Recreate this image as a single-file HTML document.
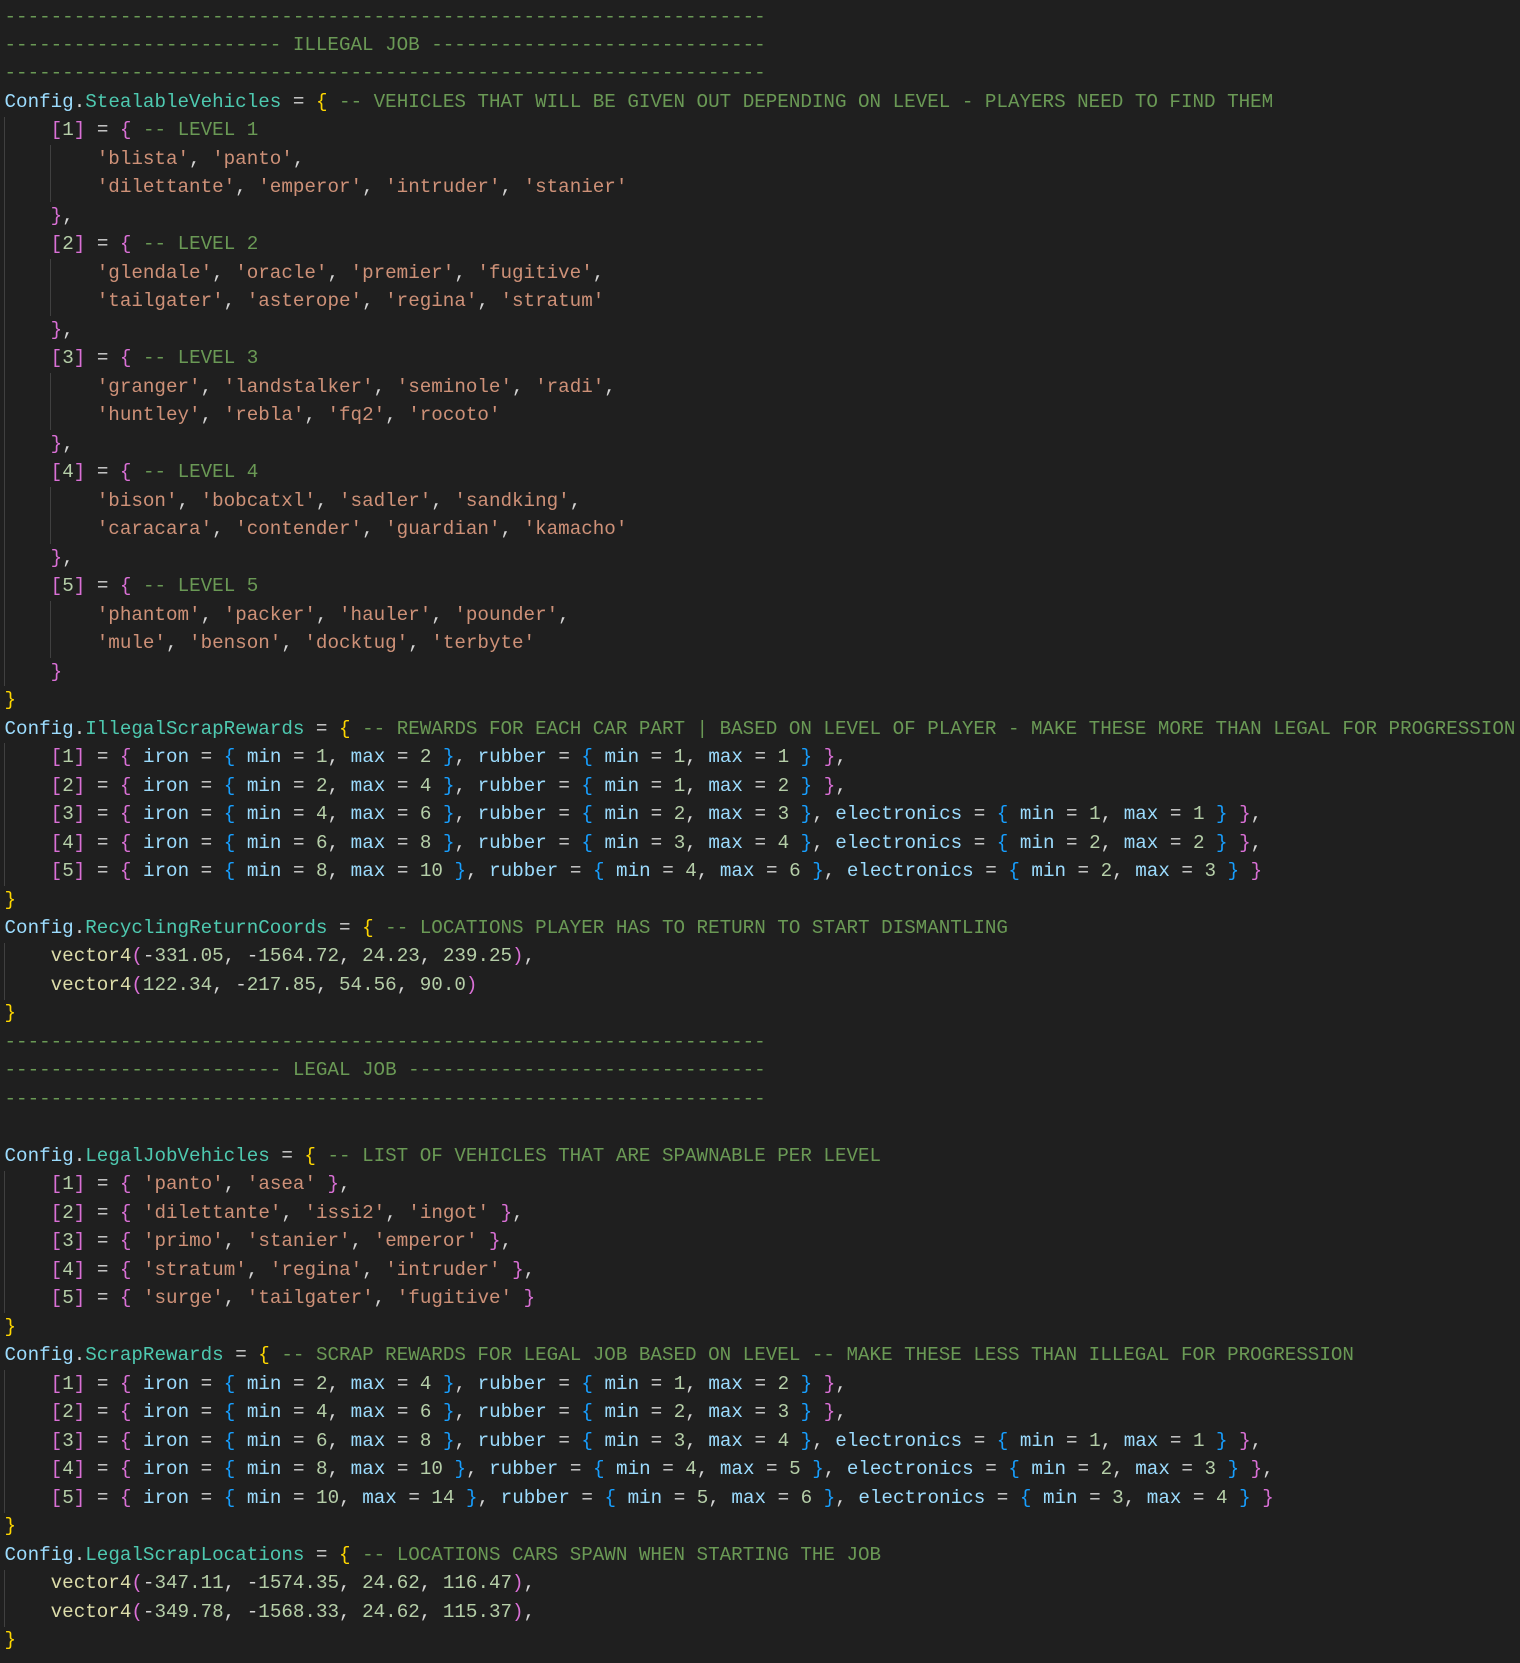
<!DOCTYPE html>
<html><head><meta charset="utf-8"><style>
html,body{margin:0;padding:0;background:#1f1f1f;}
body{width:1520px;height:1663px;overflow:hidden;position:relative;}
pre{margin:0;padding:2.5px 0 0 4.5px;font-family:"Liberation Mono",monospace;font-size:19.23px;line-height:28.49px;color:#d4d4d4;white-space:pre;position:relative;}
.c{color:#6a9955}.v{color:#9cdcfe}.p{color:#4ec9b0}.s{color:#ce9178}.n{color:#b5cea8}
.y{color:#ffd700}.o{color:#da70d6}.b{color:#179fff}.f{color:#dcdcaa}
.g{position:absolute;width:1px;background:#404040;}
</style></head><body>
<div class="g" style="left:4px;top:116.5px;height:569.8px"></div>
<div class="g" style="left:50px;top:145px;height:57px"></div>
<div class="g" style="left:50px;top:259px;height:57px"></div>
<div class="g" style="left:50px;top:373px;height:57px"></div>
<div class="g" style="left:50px;top:487px;height:57px"></div>
<div class="g" style="left:50px;top:601px;height:57px"></div>
<div class="g" style="left:4px;top:743.2px;height:142.5px"></div>
<div class="g" style="left:4px;top:942.7px;height:57px"></div>
<div class="g" style="left:4px;top:1170.6px;height:142.5px"></div>
<div class="g" style="left:4px;top:1370px;height:142.5px"></div>
<div class="g" style="left:4px;top:1569.5px;height:57px"></div>
<pre><span class="c">------------------------------------------------------------------</span>
<span class="c">------------------------ ILLEGAL JOB -----------------------------</span>
<span class="c">------------------------------------------------------------------</span>
<span class="v">Config</span>.<span class="p">StealableVehicles</span> = <span class="y">{</span> <span class="c">-- VEHICLES THAT WILL BE GIVEN OUT DEPENDING ON LEVEL - PLAYERS NEED TO FIND THEM</span>
    <span class="o">[</span><span class="n">1</span><span class="o">]</span> = <span class="o">{</span> <span class="c">-- LEVEL 1</span>
        <span class="s">'blista'</span>, <span class="s">'panto'</span>,
        <span class="s">'dilettante'</span>, <span class="s">'emperor'</span>, <span class="s">'intruder'</span>, <span class="s">'stanier'</span>
    <span class="o">}</span>,
    <span class="o">[</span><span class="n">2</span><span class="o">]</span> = <span class="o">{</span> <span class="c">-- LEVEL 2</span>
        <span class="s">'glendale'</span>, <span class="s">'oracle'</span>, <span class="s">'premier'</span>, <span class="s">'fugitive'</span>,
        <span class="s">'tailgater'</span>, <span class="s">'asterope'</span>, <span class="s">'regina'</span>, <span class="s">'stratum'</span>
    <span class="o">}</span>,
    <span class="o">[</span><span class="n">3</span><span class="o">]</span> = <span class="o">{</span> <span class="c">-- LEVEL 3</span>
        <span class="s">'granger'</span>, <span class="s">'landstalker'</span>, <span class="s">'seminole'</span>, <span class="s">'radi'</span>,
        <span class="s">'huntley'</span>, <span class="s">'rebla'</span>, <span class="s">'fq2'</span>, <span class="s">'rocoto'</span>
    <span class="o">}</span>,
    <span class="o">[</span><span class="n">4</span><span class="o">]</span> = <span class="o">{</span> <span class="c">-- LEVEL 4</span>
        <span class="s">'bison'</span>, <span class="s">'bobcatxl'</span>, <span class="s">'sadler'</span>, <span class="s">'sandking'</span>,
        <span class="s">'caracara'</span>, <span class="s">'contender'</span>, <span class="s">'guardian'</span>, <span class="s">'kamacho'</span>
    <span class="o">}</span>,
    <span class="o">[</span><span class="n">5</span><span class="o">]</span> = <span class="o">{</span> <span class="c">-- LEVEL 5</span>
        <span class="s">'phantom'</span>, <span class="s">'packer'</span>, <span class="s">'hauler'</span>, <span class="s">'pounder'</span>,
        <span class="s">'mule'</span>, <span class="s">'benson'</span>, <span class="s">'docktug'</span>, <span class="s">'terbyte'</span>
    <span class="o">}</span>
<span class="y">}</span>
<span class="v">Config</span>.<span class="p">IllegalScrapRewards</span> = <span class="y">{</span> <span class="c">-- REWARDS FOR EACH CAR PART | BASED ON LEVEL OF PLAYER - MAKE THESE MORE THAN LEGAL FOR PROGRESSION</span>
    <span class="o">[</span><span class="n">1</span><span class="o">]</span> = <span class="o">{</span> <span class="v">iron</span> = <span class="b">{</span> <span class="v">min</span> = <span class="n">1</span>, <span class="v">max</span> = <span class="n">2</span> <span class="b">}</span>, <span class="v">rubber</span> = <span class="b">{</span> <span class="v">min</span> = <span class="n">1</span>, <span class="v">max</span> = <span class="n">1</span> <span class="b">}</span> <span class="o">}</span>,
    <span class="o">[</span><span class="n">2</span><span class="o">]</span> = <span class="o">{</span> <span class="v">iron</span> = <span class="b">{</span> <span class="v">min</span> = <span class="n">2</span>, <span class="v">max</span> = <span class="n">4</span> <span class="b">}</span>, <span class="v">rubber</span> = <span class="b">{</span> <span class="v">min</span> = <span class="n">1</span>, <span class="v">max</span> = <span class="n">2</span> <span class="b">}</span> <span class="o">}</span>,
    <span class="o">[</span><span class="n">3</span><span class="o">]</span> = <span class="o">{</span> <span class="v">iron</span> = <span class="b">{</span> <span class="v">min</span> = <span class="n">4</span>, <span class="v">max</span> = <span class="n">6</span> <span class="b">}</span>, <span class="v">rubber</span> = <span class="b">{</span> <span class="v">min</span> = <span class="n">2</span>, <span class="v">max</span> = <span class="n">3</span> <span class="b">}</span>, <span class="v">electronics</span> = <span class="b">{</span> <span class="v">min</span> = <span class="n">1</span>, <span class="v">max</span> = <span class="n">1</span> <span class="b">}</span> <span class="o">}</span>,
    <span class="o">[</span><span class="n">4</span><span class="o">]</span> = <span class="o">{</span> <span class="v">iron</span> = <span class="b">{</span> <span class="v">min</span> = <span class="n">6</span>, <span class="v">max</span> = <span class="n">8</span> <span class="b">}</span>, <span class="v">rubber</span> = <span class="b">{</span> <span class="v">min</span> = <span class="n">3</span>, <span class="v">max</span> = <span class="n">4</span> <span class="b">}</span>, <span class="v">electronics</span> = <span class="b">{</span> <span class="v">min</span> = <span class="n">2</span>, <span class="v">max</span> = <span class="n">2</span> <span class="b">}</span> <span class="o">}</span>,
    <span class="o">[</span><span class="n">5</span><span class="o">]</span> = <span class="o">{</span> <span class="v">iron</span> = <span class="b">{</span> <span class="v">min</span> = <span class="n">8</span>, <span class="v">max</span> = <span class="n">10</span> <span class="b">}</span>, <span class="v">rubber</span> = <span class="b">{</span> <span class="v">min</span> = <span class="n">4</span>, <span class="v">max</span> = <span class="n">6</span> <span class="b">}</span>, <span class="v">electronics</span> = <span class="b">{</span> <span class="v">min</span> = <span class="n">2</span>, <span class="v">max</span> = <span class="n">3</span> <span class="b">}</span> <span class="o">}</span>
<span class="y">}</span>
<span class="v">Config</span>.<span class="p">RecyclingReturnCoords</span> = <span class="y">{</span> <span class="c">-- LOCATIONS PLAYER HAS TO RETURN TO START DISMANTLING</span>
    <span class="f">vector4</span><span class="o">(</span>-<span class="n">331.05</span>, -<span class="n">1564.72</span>, <span class="n">24.23</span>, <span class="n">239.25</span><span class="o">)</span>,
    <span class="f">vector4</span><span class="o">(</span><span class="n">122.34</span>, -<span class="n">217.85</span>, <span class="n">54.56</span>, <span class="n">90.0</span><span class="o">)</span>
<span class="y">}</span>
<span class="c">------------------------------------------------------------------</span>
<span class="c">------------------------ LEGAL JOB -------------------------------</span>
<span class="c">------------------------------------------------------------------</span>

<span class="v">Config</span>.<span class="p">LegalJobVehicles</span> = <span class="y">{</span> <span class="c">-- LIST OF VEHICLES THAT ARE SPAWNABLE PER LEVEL</span>
    <span class="o">[</span><span class="n">1</span><span class="o">]</span> = <span class="o">{</span> <span class="s">'panto'</span>, <span class="s">'asea'</span> <span class="o">}</span>,
    <span class="o">[</span><span class="n">2</span><span class="o">]</span> = <span class="o">{</span> <span class="s">'dilettante'</span>, <span class="s">'issi2'</span>, <span class="s">'ingot'</span> <span class="o">}</span>,
    <span class="o">[</span><span class="n">3</span><span class="o">]</span> = <span class="o">{</span> <span class="s">'primo'</span>, <span class="s">'stanier'</span>, <span class="s">'emperor'</span> <span class="o">}</span>,
    <span class="o">[</span><span class="n">4</span><span class="o">]</span> = <span class="o">{</span> <span class="s">'stratum'</span>, <span class="s">'regina'</span>, <span class="s">'intruder'</span> <span class="o">}</span>,
    <span class="o">[</span><span class="n">5</span><span class="o">]</span> = <span class="o">{</span> <span class="s">'surge'</span>, <span class="s">'tailgater'</span>, <span class="s">'fugitive'</span> <span class="o">}</span>
<span class="y">}</span>
<span class="v">Config</span>.<span class="p">ScrapRewards</span> = <span class="y">{</span> <span class="c">-- SCRAP REWARDS FOR LEGAL JOB BASED ON LEVEL -- MAKE THESE LESS THAN ILLEGAL FOR PROGRESSION</span>
    <span class="o">[</span><span class="n">1</span><span class="o">]</span> = <span class="o">{</span> <span class="v">iron</span> = <span class="b">{</span> <span class="v">min</span> = <span class="n">2</span>, <span class="v">max</span> = <span class="n">4</span> <span class="b">}</span>, <span class="v">rubber</span> = <span class="b">{</span> <span class="v">min</span> = <span class="n">1</span>, <span class="v">max</span> = <span class="n">2</span> <span class="b">}</span> <span class="o">}</span>,
    <span class="o">[</span><span class="n">2</span><span class="o">]</span> = <span class="o">{</span> <span class="v">iron</span> = <span class="b">{</span> <span class="v">min</span> = <span class="n">4</span>, <span class="v">max</span> = <span class="n">6</span> <span class="b">}</span>, <span class="v">rubber</span> = <span class="b">{</span> <span class="v">min</span> = <span class="n">2</span>, <span class="v">max</span> = <span class="n">3</span> <span class="b">}</span> <span class="o">}</span>,
    <span class="o">[</span><span class="n">3</span><span class="o">]</span> = <span class="o">{</span> <span class="v">iron</span> = <span class="b">{</span> <span class="v">min</span> = <span class="n">6</span>, <span class="v">max</span> = <span class="n">8</span> <span class="b">}</span>, <span class="v">rubber</span> = <span class="b">{</span> <span class="v">min</span> = <span class="n">3</span>, <span class="v">max</span> = <span class="n">4</span> <span class="b">}</span>, <span class="v">electronics</span> = <span class="b">{</span> <span class="v">min</span> = <span class="n">1</span>, <span class="v">max</span> = <span class="n">1</span> <span class="b">}</span> <span class="o">}</span>,
    <span class="o">[</span><span class="n">4</span><span class="o">]</span> = <span class="o">{</span> <span class="v">iron</span> = <span class="b">{</span> <span class="v">min</span> = <span class="n">8</span>, <span class="v">max</span> = <span class="n">10</span> <span class="b">}</span>, <span class="v">rubber</span> = <span class="b">{</span> <span class="v">min</span> = <span class="n">4</span>, <span class="v">max</span> = <span class="n">5</span> <span class="b">}</span>, <span class="v">electronics</span> = <span class="b">{</span> <span class="v">min</span> = <span class="n">2</span>, <span class="v">max</span> = <span class="n">3</span> <span class="b">}</span> <span class="o">}</span>,
    <span class="o">[</span><span class="n">5</span><span class="o">]</span> = <span class="o">{</span> <span class="v">iron</span> = <span class="b">{</span> <span class="v">min</span> = <span class="n">10</span>, <span class="v">max</span> = <span class="n">14</span> <span class="b">}</span>, <span class="v">rubber</span> = <span class="b">{</span> <span class="v">min</span> = <span class="n">5</span>, <span class="v">max</span> = <span class="n">6</span> <span class="b">}</span>, <span class="v">electronics</span> = <span class="b">{</span> <span class="v">min</span> = <span class="n">3</span>, <span class="v">max</span> = <span class="n">4</span> <span class="b">}</span> <span class="o">}</span>
<span class="y">}</span>
<span class="v">Config</span>.<span class="p">LegalScrapLocations</span> = <span class="y">{</span> <span class="c">-- LOCATIONS CARS SPAWN WHEN STARTING THE JOB</span>
    <span class="f">vector4</span><span class="o">(</span>-<span class="n">347.11</span>, -<span class="n">1574.35</span>, <span class="n">24.62</span>, <span class="n">116.47</span><span class="o">)</span>,
    <span class="f">vector4</span><span class="o">(</span>-<span class="n">349.78</span>, -<span class="n">1568.33</span>, <span class="n">24.62</span>, <span class="n">115.37</span><span class="o">)</span>,
<span class="y">}</span></pre></body></html>
